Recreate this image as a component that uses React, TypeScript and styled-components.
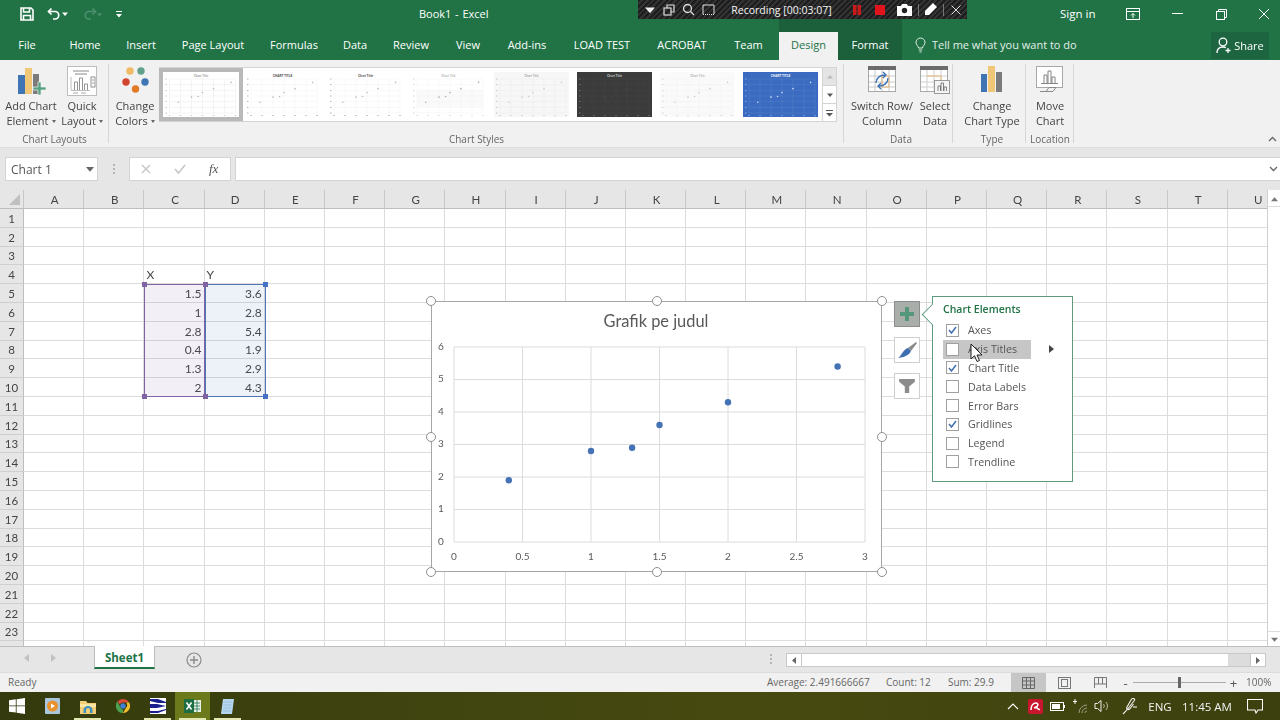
import React from "react";
import styled, { createGlobalStyle, css } from "styled-components";

const GREEN = "#217346";
const DARKGREEN = "#1c5f3b";
const UI = `"Open Sans", "Noto Sans", sans-serif`;
const SHEET = `Lato, "Open Sans", sans-serif`;

const Global = createGlobalStyle`
  html, body { margin: 0; padding: 0; overflow: hidden; background: #fff; }
  * { box-sizing: border-box; }
`;

const Page = styled.div`
  position: relative;
  width: 1280px;
  height: 720px;
  overflow: hidden;
  display: flex;
  flex-direction: column;
  font-family: ${UI};
  filter: blur(0.4px);
`;

/* ---------- title bar ---------- */
const TitleBar = styled.div`
  height: 30px;
  flex: none;
  background: ${GREEN};
  display: flex;
  align-items: stretch;
  color: #fff;
`;
const Qat = styled.div`
  width: 419px;
  flex: none;
  display: flex;
  align-items: center;
  padding: 0 0 2px 20px;
`;
const QatItem = styled.span<{ $w: number }>`
  width: ${(p) => p.$w}px;
  height: 16px;
  flex: none;
  display: flex;
  align-items: center;
`;
const WindowTitle = styled.div`
  width: 360px;
  flex: none;
  display: flex;
  align-items: center;
  padding-bottom: 3px;
  font-size: 11px;
  white-space: pre;
  word-spacing: -1px;
`;
const ContextStrip = styled.div`
  width: 123px;
  flex: none;
  background: ${DARKGREEN};
`;
const SignIn = styled.div`
  margin-left: 158px;
  width: 55px;
  flex: none;
  display: flex;
  align-items: center;
  padding-bottom: 3px;
  font-size: 11.5px;
`;
const WinButton = styled.div<{ $w: number }>`
  width: ${(p) => p.$w}px;
  flex: none;
  display: flex;
  align-items: center;
  justify-content: center;
  padding-bottom: 2px;
`;

/* ---------- recorder overlay ---------- */
const Recorder = styled.div`
  position: absolute;
  left: 638px;
  top: 0;
  width: 329px;
  height: 19px;
  display: flex;
  align-items: center;
  color: #f4f4f4;
  font-size: 10.5px;
  background: repeating-linear-gradient(135deg, #1d1d1d 0 2px, #333 2px 4px);
`;
const RecItem = styled.span<{ $w: number }>`
  width: ${(p) => p.$w}px;
  flex: none;
  display: flex;
  align-items: center;
  justify-content: center;
  white-space: nowrap;
`;

/* ---------- tabs ---------- */
const TabBar = styled.div`
  height: 30px;
  flex: none;
  background: ${GREEN};
  display: flex;
  align-items: stretch;
`;
const Tab = styled.div<{ $w: number; $kind?: "design" | "format" }>`
  width: ${(p) => p.$w}px;
  flex: none;
  display: flex;
  align-items: center;
  justify-content: center;
  padding-bottom: 1px;
  color: #fff;
  font-size: 11px;
  white-space: nowrap;
  ${(p) => p.$kind === "format" && css`background: ${DARKGREEN};`}
  ${(p) =>
    p.$kind === "design" &&
    css`
      color: ${GREEN};
      background: linear-gradient(${DARKGREEN} 0 2px, #f1f1f1 2px);
    `}
`;
const TellMe = styled.div`
  margin-left: 13px;
  width: 296px;
  flex: none;
  display: flex;
  align-items: center;
  gap: 6px;
  padding-bottom: 1px;
  color: #e4efe9;
  font-size: 11px;
`;
const Share = styled.div`
  width: 58px;
  flex: none;
  margin: 2px 0 1px;
  background: #1d6540;
  color: #fff;
  font-size: 11px;
  display: flex;
  align-items: center;
  justify-content: center;
  gap: 3px;
`;

/* ---------- ribbon ---------- */
const Ribbon = styled.div`
  height: 88px;
  flex: none;
  background: #f1f1f1;
  border-bottom: 1px solid #dcdcdc;
  display: flex;
  position: relative;
`;
const Group = styled.div<{ $w: number }>`
  width: ${(p) => p.$w}px;
  flex: none;
  display: flex;
  flex-direction: column;
  padding-top: 6px;
  position: relative;
  &::after {
    content: "";
    position: absolute;
    right: 0;
    top: 4px;
    bottom: 4px;
    width: 1px;
    background: #d6d6d6;
  }
`;
const GroupBody = styled.div<{ $pad?: number }>`
  display: flex;
  padding-left: ${(p) => p.$pad ?? 0}px;
`;
const GroupLabel = styled.div<{ $dx?: number }>`
  margin-top: auto;
  height: 16px;
  line-height: 16px;
  padding-left: ${(p) => p.$dx ?? 0}px;
  text-align: center;
  color: #666;
  font-size: 10px;
  white-space: nowrap;
`;
const BigButton = styled.div<{ $w: number }>`
  width: ${(p) => p.$w}px;
  flex: none;
  display: flex;
  flex-direction: column;
  align-items: center;
`;
const BigIcon = styled.div`
  height: 32px;
  display: flex;
  align-items: flex-start;
  justify-content: center;
`;
const BigLabel = styled.div`
  font-size: 11px;
  line-height: 15px;
  color: #444;
  text-align: center;
  white-space: nowrap;
`;
const Caret = styled.span`
  display: inline-block;
  width: 0;
  height: 0;
  margin-left: 3px;
  vertical-align: 2px;
  border-left: 2.5px solid transparent;
  border-right: 2.5px solid transparent;
  border-top: 3px solid #666;
`;
const Gallery = styled.div`
  margin: 1px 0 0 4px;
  width: 664px;
  height: 55px;
  flex: none;
  display: flex;
  align-items: center;
  gap: 8px;
  background: #fff;
  border: 1px solid #d4d4d4;
  border-left: 0;
`;
const Thumb = styled.div<{ $selected?: boolean }>`
  width: ${(p) => (p.$selected ? 84 : 75)}px;
  height: ${(p) => (p.$selected ? 53 : 45)}px;
  margin-right: ${(p) => (p.$selected ? -6 : 0)}px;
  flex: none;
  border: ${(p) => (p.$selected ? "4px solid #b9b9b9" : "0")};
  display: flex;
  & > svg { width: 100%; height: 100%; display: block; }
`;
const GalleryScroll = styled.div`
  margin-top: 1px;
  width: 14px;
  height: 55px;
  flex: none;
  display: flex;
  flex-direction: column;
  border: 1px solid #d4d4d4;
  border-left: 0;
`;
const ScrollCell = styled.div<{ $off?: boolean }>`
  flex: 1;
  display: flex;
  align-items: center;
  justify-content: center;
  background: ${(p) => (p.$off ? "#e4e4e4" : "#fff")};
  & + & { border-top: 1px solid #d4d4d4; }
`;
const Collapse = styled.div`
  position: absolute;
  right: 2px;
  bottom: 3px;
  width: 12px;
  height: 10px;
  display: flex;
  align-items: center;
  justify-content: center;
`;

/* ---------- formula bar ---------- */
const FormulaBar = styled.div`
  height: 42px;
  flex: none;
  background: #e6e6e6;
  padding: 9px 0 9px 5px;
  display: flex;
  align-items: stretch;
`;
const NameBox = styled.div`
  width: 93px;
  flex: none;
  background: #fff;
  border: 1px solid #d4d4d4;
  padding: 0 3px 0 5px;
  font-size: 12px;
  color: #555;
  display: flex;
  align-items: center;
  justify-content: space-between;
`;
const Dots = styled.div`
  width: 31px;
  flex: none;
  display: flex;
  flex-direction: column;
  align-items: center;
  justify-content: center;
  gap: 2px;
`;
const Dot = styled.span`
  width: 2px;
  height: 2px;
  background: #b4b4b4;
`;
const FxBox = styled.div`
  width: 102px;
  flex: none;
  margin-right: 4px;
  background: #fff;
  border: 1px solid #d4d4d4;
  display: flex;
  align-items: center;
  padding-left: 11px;
  gap: 23px;
`;
const FxText = styled.span`
  font-family: "Liberation Serif", serif;
  font-style: italic;
  font-size: 13px;
  color: #555;
`;
const FormulaInput = styled.div`
  flex: 1;
  background: #fff;
  border: 1px solid #d4d4d4;
  border-right: 0;
  display: flex;
  align-items: center;
  justify-content: flex-end;
  padding-right: 2px;
`;

/* ---------- sheet ---------- */
const SheetRow = styled.div`
  height: 456px;
  flex: none;
  display: flex;
`;
const SheetArea = styled.div`
  position: relative;
  width: 1267px;
  flex: none;
  overflow: hidden;
  background: #fff;
`;
const CellGrid = styled.div`
  display: grid;
  grid-template-columns: 24px repeat(21, 60.2px);
  grid-template-rows: 19px repeat(24, 18.8px);
  font-family: ${SHEET};
`;
const Corner = styled.div`
  background: #e6e6e6;
  border-right: 1px solid #c8c8c8;
  border-bottom: 1px solid #bdbdbd;
  position: relative;
  &::after {
    content: "";
    position: absolute;
    right: 3px;
    bottom: 3px;
    width: 0;
    height: 0;
    border-left: 11px solid transparent;
    border-bottom: 11px solid #c0c0c0;
  }
`;
const ColHead = styled.div`
  background: #e6e6e6;
  border-right: 1px solid #c8c8c8;
  border-bottom: 1px solid #bdbdbd;
  padding-left: 2px;
  font-size: 11.5px;
  color: #444;
  display: flex;
  align-items: center;
  justify-content: center;
`;
const RowHead = styled.div`
  background: #e6e6e6;
  border-right: 1px solid #bdbdbd;
  border-bottom: 1px solid #cfcfcf;
  padding-top: 1px;
  font-size: 11.5px;
  color: #444;
  display: flex;
  align-items: center;
  justify-content: center;
`;
const Cell = styled.div<{ $right?: boolean }>`
  border-right: 1px solid #dcdcdc;
  border-bottom: 1px solid #dcdcdc;
  font-size: 12px;
  color: #444;
  display: flex;
  align-items: center;
  justify-content: ${(p) => (p.$right ? "flex-end" : "flex-start")};
  padding: 1px 2px 0 2px;
`;
const Range = styled.div<{ $left: number; $color: string; $fill: string }>`
  position: absolute;
  left: ${(p) => p.$left}px;
  top: 94px;
  width: 61px;
  height: 113px;
  border: 1.5px solid ${(p) => p.$color};
  background: ${(p) => p.$fill};
`;
const RangeHandle = styled.span<{ $x: "l" | "r"; $y: "t" | "b"; $color: string }>`
  position: absolute;
  width: 5px;
  height: 5px;
  background: ${(p) => p.$color};
  ${(p) => (p.$x === "l" ? "left: -3px;" : "right: -3px;")}
  ${(p) => (p.$y === "t" ? "top: -3px;" : "bottom: -3px;")}
`;
const ChartFrame = styled.div`
  position: absolute;
  left: 431px;
  top: 111px;
  width: 451px;
  height: 271px;
  background: #fff;
  border: 1.5px solid #a6a6a6;
  & > svg { position: absolute; left: -1.5px; top: -1.5px; }
`;
const ChartHandle = styled.span<{ $x: number; $y: number }>`
  position: absolute;
  left: ${(p) => p.$x * 451 - 6}px;
  top: ${(p) => p.$y * 271 - 6}px;
  width: 10px;
  height: 10px;
  border-radius: 50%;
  background: #fff;
  border: 1.5px solid #8f8f8f;
`;
const ToolButton = styled.div<{ $top: number; $active?: boolean }>`
  position: absolute;
  left: 894px;
  top: ${(p) => p.$top}px;
  width: 26px;
  height: 26px;
  background: ${(p) => (p.$active ? "#a9aeab" : "#fff")};
  border: 1px solid ${(p) => (p.$active ? "#8d8d8d" : "#cfcfcf")};
  display: flex;
  align-items: center;
  justify-content: center;
`;
const Flyout = styled.div`
  position: absolute;
  left: 932px;
  top: 106px;
  width: 141px;
  height: 186px;
  background: #fff;
  border: 1px solid #5f9a7e;
  padding: 5px 0 0 10px;
  &::before {
    content: "";
    position: absolute;
    left: -9px;
    top: 9px;
    width: 16px;
    height: 16px;
    background: #fff;
    border-left: 1px solid #5f9a7e;
    border-bottom: 1px solid #5f9a7e;
    transform: rotate(45deg) scale(0.9);
  }
`;
const FlyoutTitle = styled.div`
  position: relative;
  font-size: 10.5px;
  font-weight: 600;
  line-height: 14px;
  color: ${GREEN};
  margin-bottom: 5px;
`;
const ElementRow = styled.div`
  height: 18.8px;
  display: flex;
  align-items: center;
`;
const ElementBody = styled.div<{ $hover?: boolean }>`
  width: 88px;
  height: 18.8px;
  flex: none;
  display: flex;
  align-items: center;
  padding-left: 3px;
  gap: 9px;
  font-size: 10.7px;
  color: #555;
  white-space: nowrap;
  background: ${(p) => (p.$hover ? "#c6c6c6" : "transparent")};
`;
const Check = styled.span`
  width: 13px;
  height: 13px;
  flex: none;
  background: #fff;
  border: 1px solid #a0a0a0;
  display: flex;
  align-items: center;
  justify-content: center;
`;
const SubArrow = styled.span`
  margin-left: 18px;
  width: 0;
  height: 0;
  border-top: 4px solid transparent;
  border-bottom: 4px solid transparent;
  border-left: 5px solid #444;
`;
const Pointer = styled.div`
  position: absolute;
  left: 970px;
  top: 153px;
  width: 14px;
  height: 20px;
  display: flex;
`;
const VScroll = styled.div`
  width: 13px;
  flex: none;
  background: #fff;
  border-left: 1px solid #d0d0d0;
  display: flex;
  flex-direction: column;
  padding-top: 2px;
`;
const VButton = styled.div`
  height: 15px;
  flex: none;
  background: #fff;
  border-bottom: 1px solid #dcdcdc;
  display: flex;
  align-items: center;
  justify-content: center;
`;
const VThumb = styled.div`
  flex: 1;
  background: #fff;
`;
const VEnd = styled(VButton)`
  border-bottom: 0;
  border-top: 1px solid #dcdcdc;
`;

/* ---------- sheet tabs ---------- */
const TabStrip = styled.div`
  height: 26px;
  flex: none;
  background: #e6e6e6;
  border-top: 1px solid #bdbdbd;
  display: flex;
  align-items: flex-start;
`;
const NavArrows = styled.div`
  width: 94px;
  height: 22px;
  flex: none;
  display: flex;
  align-items: center;
  padding-left: 24px;
  gap: 22px;
`;
const SheetTab = styled.div`
  width: 61px;
  height: 23px;
  margin-top: -1px;
  padding-top: 2px;
  flex: none;
  background: #fff;
  border-bottom: 2px solid ${GREEN};
  border-left: 1px solid #bdbdbd;
  border-right: 1px solid #bdbdbd;
  color: ${GREEN};
  font-weight: 700;
  font-size: 11.5px;
  display: flex;
  align-items: center;
  justify-content: center;
`;
const AddSheet = styled.div`
  margin-left: 31px;
  width: 18px;
  height: 25px;
  flex: none;
  display: flex;
  align-items: center;
`;
const SplitDots = styled(Dots)`
  margin-left: 555px;
  width: 24px;
  height: 24px;
`;
const HScroll = styled.div`
  margin-left: 3px;
  margin-top: 6px;
  width: 480px;
  height: 14px;
  flex: none;
  display: flex;
  border: 1px solid #c8c8c8;
  background: #dcdcdc;
`;
const HButton = styled.div`
  width: 14px;
  flex: none;
  background: #fff;
  display: flex;
  align-items: center;
  justify-content: center;
`;
const HThumb = styled.div`
  width: 427px;
  flex: none;
  background: #fff;
  border-left: 1px solid #c8c8c8;
`;
const HGap = styled.div`
  flex: 1;
  border-right: 1px solid #c8c8c8;
`;

/* ---------- status bar ---------- */
const StatusBar = styled.div`
  height: 20px;
  flex: none;
  background: #f1f1f1;
  border-top: 1px solid #dcdcdc;
  display: flex;
  align-items: center;
  font-size: 10px;
  color: #666;
`;
const StatusText = styled.span<{ $w: number; $ml?: number }>`
  width: ${(p) => p.$w}px;
  margin: -2px 0 0 ${(p) => p.$ml ?? 0}px;
  flex: none;
  white-space: nowrap;
`;
const ViewButton = styled.div<{ $w: number; $active?: boolean }>`
  width: ${(p) => p.$w}px;
  height: 19px;
  flex: none;
  display: flex;
  align-items: center;
  justify-content: center;
  background: ${(p) => (p.$active ? "#c6c6c6" : "transparent")};
`;
const Zoomer = styled.div`
  width: 93px;
  height: 1px;
  flex: none;
  background: #aaa;
  position: relative;
`;
const ZoomThumb = styled.span`
  position: absolute;
  left: 45px;
  top: -5px;
  width: 3px;
  height: 11px;
  background: #666;
`;
const ZoomSign = styled.span<{ $w: number }>`
  width: ${(p) => p.$w}px;
  flex: none;
  text-align: center;
  font-size: 13px;
  color: #555;
`;

/* ---------- taskbar ---------- */
const Taskbar = styled.div`
  height: 28px;
  flex: none;
  background: linear-gradient(90deg, #343a0d, #3f430f 30%, #474a10 60%, #3c400e);
  display: flex;
  align-items: stretch;
  color: #f2f2f2;
  font-size: 11.5px;
`;
const TaskItem = styled.div<{ $active?: boolean; $open?: boolean }>`
  width: 35px;
  flex: none;
  position: relative;
  display: flex;
  align-items: center;
  justify-content: center;
  background: ${(p) => (p.$active ? "#6d7a1c" : "transparent")};
  ${(p) =>
    p.$open &&
    css`
      &::after {
        content: "";
        position: absolute;
        left: 4px;
        right: 4px;
        bottom: 0;
        height: 2px;
        background: #e6e8b4;
      }
    `}
`;
const StartItem = styled(TaskItem)`
  width: 34px;
  padding-right: 1px;
  margin-right: 1px;
`;
const Tray = styled.div`
  margin-left: auto;
  display: flex;
  padding-right: 10px;
`;
const TrayItem = styled.div<{ $w: number }>`
  width: ${(p) => p.$w}px;
  flex: none;
  display: flex;
  align-items: center;
  justify-content: center;
  white-space: nowrap;
`;

/* ---------- drawings ---------- */
const Tri = ({ c = "#fff", w = 6, down = true }: { c?: string; w?: number; down?: boolean }) => (
  <svg width={w} height={w} viewBox="0 0 6 6">
    <path d={down ? "M0 1.5h6L3 5z" : "M0 4.5h6L3 1z"} fill={c} />
  </svg>
);
const SaveIcon = () => (
  <svg width="14" height="14" viewBox="0 0 14 14" fill="none" stroke="#fff" strokeWidth="1.6">
    <path d="M1 1h10l2 2v10H1z" />
    <path d="M3.5 1v4h6V1M3.5 13V8.5h7V13" />
  </svg>
);
const UndoIcon = ({ c = "#fff" }: { c?: string }) => (
  <svg width="14" height="14" viewBox="0 0 14 14" fill="none" stroke={c} strokeWidth="1.7">
    <path d="M4.5 1.5L1.5 4.5l3 3" />
    <path d="M2 4.5h6a3.7 3.7 0 0 1 0 7.5H6" />
  </svg>
);
const RedoIcon = () => (
  <svg width="14" height="14" viewBox="0 0 14 14" fill="none" stroke="#4d9070" strokeWidth="1.6">
    <path d="M9.5 1.5l3 3-3 3" />
    <path d="M12 4.5H6a3.7 3.7 0 0 0 0 7.5h2" />
  </svg>
);
const Customize = () => (
  <svg width="8" height="10" viewBox="0 0 8 10">
    <path d="M1 2h6v1H1z" fill="#fff" />
    <path d="M1 5h6L4 8.500z" fill="#fff" />
  </svg>
);
const AddChartIcon = () => (
  <svg width="30" height="30" viewBox="0 0 30 30">
    <rect x="2" y="9" width="7" height="19" fill="#3f74b5" />
    <rect x="9" y="2" width="7" height="26" fill="#f0c777" />
    <rect x="17" y="8" width="6" height="20" fill="#7b7b7b" />
    <path d="M25 16v5h5v3h-5v5h-3v-5h-5v-3h5v-5z" fill="#55a283" stroke="#f1f1f1" strokeWidth="0.7" />
  </svg>
);
const QuickLayoutIcon = () => (
  <svg width="30" height="30" viewBox="0 0 30 30" fill="none">
    <rect x="0.500" y="0.500" width="29" height="29" fill="#fff" stroke="#bdbdbd" />
    <path d="M6 5h16M8 8h12" stroke="#8a8a8a" strokeWidth="1" />
    <path d="M4 24.500h19M4 11v13" stroke="#bdbdbd" />
    <path d="M7.500 24v-8h3v8M12.500 24V12h3v12M17.500 24v-6h3v6" stroke="#777" strokeWidth="0.8" />
    <rect x="24" y="11" width="4" height="10" stroke="#777" strokeWidth="0.8" />
    <path d="M25 14h2M25 17h2" stroke="#777" strokeWidth="0.7" />
    <path d="M6 27h5M14 27h5" stroke="#aaa" />
  </svg>
);
const ColorsIcon = () => (
  <svg width="30" height="30" viewBox="0 0 30 30">
    <circle cx="10" cy="5" r="3.700" fill="#f0b963" />
    <circle cx="21" cy="5" r="3.700" fill="#62a08a" />
    <circle cx="6" cy="16" r="3.700" fill="#d2452f" />
    <circle cx="25" cy="16" r="3.700" fill="#3f74b5" />
    <circle cx="15.500" cy="23" r="3.700" fill="#e07a26" />
  </svg>
);
const SwitchIcon = () => (
  <svg width="28" height="26" viewBox="0 0 28 26" fill="none">
    <rect x="0.500" y="0.500" width="27" height="25" fill="#fff" stroke="#a8a8a8" />
    <rect x="0" y="0" width="28" height="4" fill="#6b6b6b" />
    <path d="M7 4v21M14 4v21M21 4v21M1 10h26M1 16h26M1 21h26" stroke="#c9c9c9" />
    <path d="M14 10h7v11h-7z" stroke="#e8b77a" />
    <path d="M8 17c0-5 4-8 9-8m-2-3 3 3-3 3M20 12c0 5-4 8-9 8m2 3-3-3 3-3" stroke="#3f74b5" strokeWidth="1.400" />
  </svg>
);
const SelectDataIcon = () => (
  <svg width="30" height="28" viewBox="0 0 30 28" fill="none">
    <rect x="0.500" y="0.500" width="27" height="25" fill="#fff" stroke="#a8a8a8" />
    <rect x="0" y="0" width="28" height="4" fill="#6b6b6b" />
    <path d="M7 4v21M14 4v21M21 4v21M1 10h26M1 16h26M1 21h26" stroke="#cfcfcf" />
    <path d="M7 10h14v11" stroke="#e8b77a" />
    <rect x="14.500" y="14.500" width="15" height="13" fill="#f4f4f4" stroke="#9a9a9a" />
    <path d="M18 25v-5h2.500v5M21 25v-8h2.500v8M24 25v-4h2.500v4" stroke="#666" strokeWidth="0.8" />
  </svg>
);
const ChangeTypeIcon = () => (
  <svg width="24" height="26" viewBox="0 0 24 26">
    <rect x="1" y="8" width="6" height="18" fill="#3f74b5" />
    <rect x="8" y="0" width="7" height="26" fill="#f0c777" />
    <rect x="16" y="6" width="6" height="20" fill="#7b7b7b" />
  </svg>
);
const MoveChartIcon = () => (
  <svg width="28" height="26" viewBox="0 0 28 26" fill="none">
    <rect x="0.500" y="0.500" width="26" height="21" fill="#fff" stroke="#a8a8a8" />
    <path d="M8 17V9h3v8M12 17V5h3v12M16 17v-6h3v6M5 17.500h17" stroke="#777" strokeWidth="0.9" />
    <path d="M10 25.500l3-4h7l-3 4H4" stroke="#8a8a8a" />
  </svg>
);
const BulbIcon = () => (
  <svg width="11" height="16" viewBox="0 0 11 16" fill="none" stroke="#e4efe9" strokeWidth="1">
    <path d="M3.500 11c0-2-2.500-3-2.500-5.500a4.500 4.500 0 0 1 9 0C10 8 7.500 9 7.500 11z" />
    <path d="M3.800 13h3.400M4.500 15h2" />
  </svg>
);
const ShareIcon = () => (
  <svg width="15" height="17" viewBox="0 0 15 17" fill="none" stroke="#fff" strokeWidth="1.300">
    <circle cx="7" cy="5" r="3.800" />
    <path d="M1 16c0-4 2.500-6 6-6 1 0 2 .2 2.800.6" />
    <path d="M12 11v5M9.500 13.500h5" />
  </svg>
);
const MinChev = ({ up = false }: { up?: boolean }) => (
  <svg width="9" height="6" viewBox="0 0 9 6" fill="none" stroke="#666" strokeWidth="1.300">
    <path d={up ? "M1 5l3.500-3.500L8 5" : "M1 1l3.500 3.500L8 1"} />
  </svg>
);

const DATA: [number, number][] = [
  [1.5, 3.6],
  [1, 2.8],
  [2.8, 5.4],
  [0.4, 1.9],
  [1.3, 2.9],
  [2, 4.3],
];

type MiniProps = {
  bg: string;
  title: string;
  fg: string;
  grid: string;
  dot: string;
  bold?: boolean;
  bands?: boolean;
};
const MiniChart = ({ bg, title, fg, grid, dot, bold, bands }: MiniProps) => {
  const x0 = 6;
  const x1 = 72;
  const y0 = 41;
  const y1 = 7;
  const xs = [0, 0.5, 1, 1.5, 2, 2.5, 3];
  const ys = [0, 1, 2, 3, 4, 5, 6];
  const px = (v: number) => x0 + (v / 3) * (x1 - x0);
  const py = (v: number) => y0 - (v / 6) * (y0 - y1);
  return (
    <svg viewBox="0 0 75 45">
      <rect width="75" height="45" fill={bg} />
      {bands && <rect x={x0} y={py(4)} width={x1 - x0} height={py(1) - py(4)} fill="#fafafa" />}
      <text x="37.500" y="4.500" textAnchor="middle" fontSize="3.200" fontWeight={bold ? 700 : 400} fill={fg} fontFamily="Lato, sans-serif">
        {title}
      </text>
      {xs.map((v) => (
        <line key={v} x1={px(v)} x2={px(v)} y1={y0} y2={y1} stroke={grid} strokeWidth="0.4" />
      ))}
      {ys.map((v) => (
        <line key={v} x1={x0} x2={x1} y1={py(v)} y2={py(v)} stroke={grid} strokeWidth="0.4" />
      ))}
      {ys.map((v) => (
        <rect key={v} x="2" y={py(v) - 0.4} width="1.500" height="0.800" fill={fg} opacity="0.5" />
      ))}
      {xs.map((v) => (
        <rect key={v} x={px(v) - 0.7} y="43" width="1.400" height="0.800" fill={fg} opacity="0.5" />
      ))}
      {DATA.map(([a, b]) => (
        <circle key={a} cx={px(a)} cy={py(b)} r="0.800" fill={dot} />
      ))}
    </svg>
  );
};

const MainChart = () => {
  const L = 23;
  const R = 434;
  const B = 241;
  const T = 46;
  const xs = [0, 0.5, 1, 1.5, 2, 2.5, 3];
  const ys = [0, 1, 2, 3, 4, 5, 6];
  const px = (v: number) => L + (v / 3) * (R - L);
  const py = (v: number) => B - (v / 6) * (B - T);
  const txt = { fontFamily: SHEET, fontSize: 10, fill: "#595959" };
  return (
    <svg width="451" height="271" viewBox="0 0 451 271">
      <text x="225" y="25.500" textAnchor="middle" fontFamily={SHEET} fontSize="16.400" fill="#595959">
        Grafik pe judul
      </text>
      {xs.map((v) => (
        <line key={v} x1={px(v)} x2={px(v)} y1={T} y2={B} stroke="#dcdcdc" />
      ))}
      {ys.map((v) => (
        <line key={v} x1={L} x2={R} y1={py(v)} y2={py(v)} stroke="#dcdcdc" />
      ))}
      {ys.map((v) => (
        <text key={v} x="10" y={py(v) + 2.500} textAnchor="middle" {...txt}>
          {v}
        </text>
      ))}
      {xs.map((v) => (
        <text key={v} x={px(v)} y="259" textAnchor="middle" {...txt}>
          {v}
        </text>
      ))}
      {DATA.map(([a, b]) => (
        <circle key={a} cx={px(a)} cy={py(b)} r="3.200" fill="#4472b4" />
      ))}
    </svg>
  );
};

const ELEMENTS: [string, boolean][] = [
  ["Axes", true],
  ["Axis Titles", false],
  ["Chart Title", true],
  ["Data Labels", false],
  ["Error Bars", false],
  ["Gridlines", true],
  ["Legend", false],
  ["Trendline", false],
];

const TABS: [string, number][] = [
  ["File", 54],
  ["Home", 62],
  ["Insert", 50],
  ["Page Layout", 94],
  ["Formulas", 68],
  ["Data", 54],
  ["Review", 58],
  ["View", 56],
  ["Add-ins", 62],
  ["LOAD TEST", 88],
  ["ACROBAT", 72],
  ["Team", 61],
];

const COLS = "ABCDEFGHIJKLMNOPQRSTU".split("");
const ROWS = Array.from({ length: 24 }, (_, i) => i + 1);
const CELLS: Record<string, string> = {
  C4: "X",
  D4: "Y",
  C5: "1.5",
  D5: "3.6",
  C6: "1",
  D6: "2.8",
  C7: "2.8",
  D7: "5.4",
  C8: "0.4",
  D8: "1.9",
  C9: "1.3",
  D9: "2.9",
  C10: "2",
  D10: "4.3",
};

const THUMBS: MiniProps[] = [
  { bg: "#fff", title: "Chart Title", fg: "#777", grid: "#e6e6e6", dot: "#bbb" },
  { bg: "#fff", title: "CHART TITLE", fg: "#444", grid: "#eee", dot: "#bbb", bold: true },
  { bg: "#fff", title: "Chart Title", fg: "#444", grid: "#eee", dot: "#bbb", bold: true },
  { bg: "#fff", title: "Chart Title", fg: "#999", grid: "#efefef", dot: "#aaa", bands: true },
  { bg: "#f7f7f7", title: "Chart Title", fg: "#888", grid: "#ececec", dot: "#ccc" },
  { bg: "#3b3b3b", title: "Chart Title", fg: "#ccc", grid: "#4a4a4a", dot: "#4a4a4a", bold: true },
  { bg: "#fafafa", title: "Chart Title", fg: "#999", grid: "#eee", dot: "#ccc" },
  { bg: "#3a6bc0", title: "CHART TITLE", fg: "#fff", grid: "#5b85cd", dot: "#cfe0f7", bold: true },
];

export default function App() {
  return (
    <>
      <Global />
      <Page>
        <TitleBar>
          <Qat>
            <QatItem $w={27}><SaveIcon /></QatItem>
            <QatItem $w={15}><UndoIcon /></QatItem>
            <QatItem $w={21}><Tri w={6} /></QatItem>
            <QatItem $w={14}><RedoIcon /></QatItem>
            <QatItem $w={18}><Tri w={5} c="#4d9070" /></QatItem>
            <QatItem $w={10}><Customize /></QatItem>
          </Qat>
          <WindowTitle>{"Book1  -  Excel"}</WindowTitle>
          <ContextStrip />
          <SignIn>Sign in</SignIn>
          <WinButton $w={36}>
            <svg width="14" height="12" viewBox="0 0 14 12" fill="none" stroke="#fff">
              <rect x="0.500" y="0.500" width="13" height="11" />
              <path d="M0 3.500h14M7 10V5.500M5 7.500l2-2 2 2" />
            </svg>
          </WinButton>
          <WinButton $w={52}>
            <svg width="11" height="2" viewBox="0 0 11 2"><rect width="11" height="1" fill="#fff" /></svg>
          </WinButton>
          <WinButton $w={36}>
            <svg width="11" height="11" viewBox="0 0 11 11" fill="none" stroke="#fff">
              <rect x="0.500" y="2.500" width="8" height="8" />
              <path d="M2.500 2.500v-2h8v8h-2" />
            </svg>
          </WinButton>
          <WinButton $w={50}>
            <svg width="12" height="12" viewBox="0 0 12 12" stroke="#fff"><path d="M1 1l10 10M11 1L1 11" /></svg>
          </WinButton>
        </TitleBar>
        <Recorder>
          <RecItem $w={23}><Tri w={10} c="#eee" /></RecItem>
          <RecItem $w={15}>
            <svg width="12" height="12" viewBox="0 0 12 12" fill="none" stroke="#ddd" strokeWidth="1.200">
              <rect x="1" y="4" width="7" height="7" />
              <path d="M4 4V1h7v7H8" />
            </svg>
          </RecItem>
          <RecItem $w={24}>
            <svg width="13" height="13" viewBox="0 0 13 13" fill="none" stroke="#ddd" strokeWidth="1.300">
              <circle cx="5.500" cy="5.500" r="4" />
              <path d="M8.500 8.500L12 12" />
            </svg>
          </RecItem>
          <RecItem $w={16}>
            <svg width="13" height="11" viewBox="0 0 13 11" fill="none" stroke="#ddd">
              <path d="M1 10V1h11v9" />
              <path d="M1 10.500h11" strokeDasharray="1 1" />
            </svg>
          </RecItem>
          <RecItem $w={131}>Recording [00:03:07]</RecItem>
          <RecItem $w={20}>
            <svg width="8" height="10" viewBox="0 0 8 10" fill="#c81a1a"><rect width="3.500" height="10" /><rect x="4.500" width="3.500" height="10" /></svg>
          </RecItem>
          <RecItem $w={26}>
            <svg width="10" height="10" viewBox="0 0 10 10"><rect width="10" height="10" fill="#e0141a" /></svg>
          </RecItem>
          <RecItem $w={22}>
            <svg width="15" height="12" viewBox="0 0 15 12">
              <path d="M0 2h4l1-2h5l1 2h4v10H0z" fill="#fff" />
              <circle cx="7.500" cy="6.500" r="2.700" fill="#222" />
            </svg>
          </RecItem>
          <RecItem $w={6}>
            <svg width="1" height="12" viewBox="0 0 1 12"><rect width="1" height="12" fill="#777" /></svg>
          </RecItem>
          <RecItem $w={18}>
            <svg width="13" height="13" viewBox="0 0 13 13"><path d="M9 0l4 4-8 8H1V8z" fill="#fff" /></svg>
          </RecItem>
          <RecItem $w={8}>
            <svg width="1" height="12" viewBox="0 0 1 12"><rect width="1" height="12" fill="#777" /></svg>
          </RecItem>
          <RecItem $w={18}>
            <svg width="10" height="10" viewBox="0 0 10 10" stroke="#ddd"><path d="M0.500 0.500l9 9M9.500 0.500l-9 9" /></svg>
          </RecItem>
        </Recorder>

        <TabBar>
          {TABS.map(([t, w]) => (
            <Tab key={t} $w={w}>{t}</Tab>
          ))}
          <Tab $w={59} $kind="design">Design</Tab>
          <Tab $w={64} $kind="format">Format</Tab>
          <TellMe><BulbIcon />Tell me what you want to do</TellMe>
          <Share><ShareIcon />Share</Share>
        </TabBar>

        <Ribbon>
          <Group $w={109}>
            <GroupBody $pad={3}>
              <BigButton $w={56}>
                <BigIcon><AddChartIcon /></BigIcon>
                <BigLabel>Add Chart<br />Element<Caret /></BigLabel>
              </BigButton>
              <BigButton $w={46}>
                <BigIcon><QuickLayoutIcon /></BigIcon>
                <BigLabel>Quick<br />Layout<Caret /></BigLabel>
              </BigButton>
            </GroupBody>
            <GroupLabel>Chart Layouts</GroupLabel>
          </Group>
          <Group $w={735}>
            <GroupBody $pad={6}>
              <BigButton $w={40}>
                <BigIcon><ColorsIcon /></BigIcon>
                <BigLabel>Change<br />Colors<Caret /></BigLabel>
              </BigButton>
              <Gallery>
                {THUMBS.map((t, i) => (
                  <Thumb key={i} $selected={i === 0}>
                    <MiniChart {...t} />
                  </Thumb>
                ))}
              </Gallery>
              <GalleryScroll>
                <ScrollCell $off><Tri c="#bbb" w={6} down={false} /></ScrollCell>
                <ScrollCell><Tri c="#555" w={6} /></ScrollCell>
                <ScrollCell>
                  <svg width="7" height="8" viewBox="0 0 7 8"><path d="M0 1h7v1H0zM0 4h7L3.500 7.500z" fill="#555" /></svg>
                </ScrollCell>
              </GalleryScroll>
            </GroupBody>
            <GroupLabel>Chart Styles</GroupLabel>
          </Group>
          <Group $w={109}>
            <GroupBody>
              <BigButton $w={76}>
                <BigIcon><SwitchIcon /></BigIcon>
                <BigLabel>Switch Row/<br />Column</BigLabel>
              </BigButton>
              <BigButton $w={30}>
                <BigIcon><SelectDataIcon /></BigIcon>
                <BigLabel>Select<br />Data</BigLabel>
              </BigButton>
            </GroupBody>
            <GroupLabel $dx={5}>Data</GroupLabel>
          </Group>
          <Group $w={73}>
            <GroupBody $pad={5}>
              <BigButton $w={68}>
                <BigIcon><ChangeTypeIcon /></BigIcon>
                <BigLabel>Change<br />Chart Type</BigLabel>
              </BigButton>
            </GroupBody>
            <GroupLabel $dx={5}>Type</GroupLabel>
          </Group>
          <Group $w={48}>
            <GroupBody>
              <BigButton $w={48}>
                <BigIcon><MoveChartIcon /></BigIcon>
                <BigLabel>Move<br />Chart</BigLabel>
              </BigButton>
            </GroupBody>
            <GroupLabel>Location</GroupLabel>
          </Group>
          <Collapse><MinChev up /></Collapse>
        </Ribbon>

        <FormulaBar>
          <NameBox>Chart 1<Tri c="#666" w={8} /></NameBox>
          <Dots><Dot /><Dot /><Dot /></Dots>
          <FxBox>
            <svg width="10" height="10" viewBox="0 0 10 10" stroke="#c4c4c4" strokeWidth="1.300"><path d="M1 1l8 8M9 1L1 9" /></svg>
            <svg width="12" height="10" viewBox="0 0 12 10" fill="none" stroke="#c4c4c4" strokeWidth="1.500"><path d="M1 5l3.500 4L11 1" /></svg>
            <FxText>fx</FxText>
          </FxBox>
          <FormulaInput><MinChev /></FormulaInput>
        </FormulaBar>

        <SheetRow>
          <SheetArea>
            <CellGrid>
              <Corner />
              {COLS.map((c) => (
                <ColHead key={c}>{c}</ColHead>
              ))}
              {ROWS.map((r) => (
                <React.Fragment key={r}>
                  <RowHead>{r < 24 ? r : ""}</RowHead>
                  {COLS.map((c) => {
                    const v = CELLS[c + r];
                    return (
                      <Cell key={c} $right={r > 4}>
                        {v}
                      </Cell>
                    );
                  })}
                </React.Fragment>
              ))}
            </CellGrid>
            <Range $left={144} $color="#8064a2" $fill="rgba(128,100,162,0.1)">
              <RangeHandle $x="l" $y="t" $color="#8064a2" />
              <RangeHandle $x="l" $y="b" $color="#8064a2" />
            </Range>
            <Range $left={205} $color="#4f75b5" $fill="rgba(79,129,189,0.1)">
              <RangeHandle $x="l" $y="t" $color="#8064a2" />
              <RangeHandle $x="l" $y="b" $color="#8064a2" />
              <RangeHandle $x="r" $y="t" $color="#4472c4" />
              <RangeHandle $x="r" $y="b" $color="#4472c4" />
            </Range>
            <ChartFrame>
              <MainChart />
              <ChartHandle $x={0} $y={0} />
              <ChartHandle $x={0.5} $y={0} />
              <ChartHandle $x={1} $y={0} />
              <ChartHandle $x={0} $y={0.5} />
              <ChartHandle $x={1} $y={0.5} />
              <ChartHandle $x={0} $y={1} />
              <ChartHandle $x={0.5} $y={1} />
              <ChartHandle $x={1} $y={1} />
            </ChartFrame>
            <ToolButton $top={111} $active>
              <svg width="14" height="14" viewBox="0 0 14 14"><path d="M5 0h4v5h5v4H9v5H5V9H0V5h5z" fill="#55977a" /></svg>
            </ToolButton>
            <ToolButton $top={147}>
              <svg width="19" height="17" viewBox="0 0 19 17">
                <path d="M10 6l8-6 1 1-6 8z" fill="#8a8a8a" />
                <path d="M10 6l3 3c-1 3-5 6-13 7 3-2 3-4 5-6 1.500-2 3-3.500 5-4z" fill="#3f6fb0" />
              </svg>
            </ToolButton>
            <ToolButton $top={183}>
              <svg width="16" height="14" viewBox="0 0 18 16"><path d="M0 0h18v3l-6.500 5.500V16h-5V8.500L0 3z" fill="#8c8c8c" /></svg>
            </ToolButton>
            <Flyout>
              <FlyoutTitle>Chart Elements</FlyoutTitle>
              {ELEMENTS.map(([label, on], i) => (
                <ElementRow key={label}>
                  <ElementBody $hover={i === 1}>
                    <Check>
                      {on && (
                        <svg width="9" height="8" viewBox="0 0 9 8" fill="none" stroke="#3f6fb0" strokeWidth="1.500">
                          <path d="M1 4l2.500 3L8 1" />
                        </svg>
                      )}
                    </Check>
                    {label}
                  </ElementBody>
                  {i === 1 && <SubArrow />}
                </ElementRow>
              ))}
            </Flyout>
            <Pointer>
              <svg width="14" height="20" viewBox="0 0 14 20">
                <path d="M1 1v15l3.500-3.300L7 18.500l2.500-1-2.500-5.500h5z" fill="#fff" stroke="#222" strokeWidth="1" />
              </svg>
            </Pointer>
          </SheetArea>
          <VScroll>
            <VButton><Tri c="#777" w={7} down={false} /></VButton>
            <VThumb />
            <VEnd><Tri c="#777" w={7} /></VEnd>
          </VScroll>
        </SheetRow>

        <TabStrip>
          <NavArrows>
            <svg width="5" height="8" viewBox="0 0 5 8"><path d="M5 0v8L0 4z" fill="#c2c2c2" /></svg>
            <svg width="5" height="8" viewBox="0 0 5 8"><path d="M0 0v8l5-4z" fill="#c2c2c2" /></svg>
          </NavArrows>
          <SheetTab>Sheet1</SheetTab>
          <AddSheet>
            <svg width="16" height="16" viewBox="0 0 16 16" fill="none" stroke="#8a8a8a">
              <circle cx="8" cy="8" r="7" strokeWidth="1.200" />
              <path d="M8 4v8M4 8h8" strokeWidth="1.400" />
            </svg>
          </AddSheet>
          <SplitDots><Dot /><Dot /><Dot /></SplitDots>
          <HScroll>
            <HButton><svg width="4" height="7" viewBox="0 0 4 7"><path d="M4 0v7L0 3.500z" fill="#666" /></svg></HButton>
            <HThumb />
            <HGap />
            <HButton><svg width="4" height="7" viewBox="0 0 4 7"><path d="M0 0v7l4-3.500z" fill="#666" /></svg></HButton>
          </HScroll>
        </TabStrip>

        <StatusBar>
          <StatusText $w={759} $ml={8}>Ready</StatusText>
          <StatusText $w={119}>Average: 2.491666667</StatusText>
          <StatusText $w={62}>Count: 12</StatusText>
          <StatusText $w={63}>Sum: 29.9</StatusText>
          <ViewButton $w={35} $active>
            <svg width="13" height="12" viewBox="0 0 13 12" fill="none" stroke="#666"><path d="M.5.500h12v11H.5zM4.500.500v11M8.500.500v11M.5 4h12M.5 8h12" /></svg>
          </ViewButton>
          <ViewButton $w={37}>
            <svg width="13" height="12" viewBox="0 0 13 12" fill="none" stroke="#777"><rect x=".5" y=".5" width="12" height="11" /><rect x="3.500" y="2.500" width="6" height="7" /></svg>
          </ViewButton>
          <ViewButton $w={35}>
            <svg width="13" height="12" viewBox="0 0 13 12" fill="none" stroke="#777"><path d="M.5 11V.5h12V11M.5 7h12M4.500.500V7M8.500.500V7" /></svg>
          </ViewButton>
          <ZoomSign $w={15}>-</ZoomSign>
          <Zoomer><ZoomThumb /></Zoomer>
          <ZoomSign $w={15}>+</ZoomSign>
          <StatusText $w={27} $ml={5}>100%</StatusText>
        </StatusBar>

        <Taskbar>
          <StartItem>
            <svg width="16" height="16" viewBox="0 0 16 16" fill="#fff">
              <path d="M0 2.300L6.800 1.300v6.200H0zM7.600 1.200L16 0v7.500H7.600zM0 8.300h6.800v6.300L0 13.700zM7.600 8.300H16V16l-8.400-1.200z" />
            </svg>
          </StartItem>
          <TaskItem>
            <svg width="15" height="16" viewBox="0 0 15 16">
              <rect width="15" height="16" rx="1" fill="#a9c6dd" />
              <circle cx="7.500" cy="8" r="5.500" fill="#e8912d" />
              <path d="M6 5.500v5l4-2.500z" fill="#fff" />
            </svg>
          </TaskItem>
          <TaskItem $open>
            <svg width="16" height="15" viewBox="0 0 16 15">
              <path d="M0 2h6l1.500 2H16v11H0z" fill="#f2cf76" />
              <path d="M0 5h16v3H0z" fill="#fbe6a3" />
              <path d="M3.500 14v-3a4.500 4 0 0 1 9 0v3h-2.500v-3a2 2 0 0 0-4 0v3z" fill="#3a8fc4" />
            </svg>
          </TaskItem>
          <TaskItem>
            <svg width="14" height="14" viewBox="0 0 14 14">
              <path d="M7 0a7 7 0 0 1 6.100 3.500H7a3.500 3.500 0 0 0-3.200 2.100L1.500 2.500A7 7 0 0 1 7 0z" fill="#d94b38" />
              <path d="M13.100 3.500A7 7 0 0 1 7 14l3-5.200a3.500 3.500 0 0 0 0-5.300z" fill="#f1c02f" />
              <path d="M1.500 2.500L4.500 8.800A3.500 3.500 0 0 0 7 10.500L7 14A7 7 0 0 1 1.500 2.500z" fill="#4aa24f" />
              <circle cx="7" cy="7" r="2.700" fill="#3f7fd6" />
            </svg>
          </TaskItem>
          <TaskItem $open>
            <svg width="16" height="16" viewBox="0 0 16 16">
              <rect width="16" height="16" fill="#fff" />
              <path d="M0 1h8l8 3v1H8L0 3zM0 6h7l9 2-9 2H0zM0 13h8l8-2v1l-8 3H0z" fill="#1a1f8f" />
            </svg>
          </TaskItem>
          <TaskItem $active $open>
            <svg width="17" height="14" viewBox="0 0 17 14">
              <rect x="9" y="1" width="8" height="12" fill="#e8f1ec" />
              <path d="M10 4h6M10 7h6M10 10h6M13 1v12" stroke="#217346" strokeWidth="0.8" />
              <rect width="10" height="14" fill="#1d6f42" />
              <path d="M2.500 3.500l5 7M7.500 3.500l-5 7" stroke="#fff" strokeWidth="1.500" />
            </svg>
          </TaskItem>
          <TaskItem $open>
            <svg width="13" height="15" viewBox="0 0 13 15">
              <path d="M2 0h11l-2 15H0z" fill="#b6d6ee" />
              <path d="M3 3h8M2.700 6h8M2.300 9h8M2 12h8" stroke="#8fb5d2" strokeWidth="0.7" />
            </svg>
          </TaskItem>
          <Tray>
            <TrayItem $w={22}>
              <svg width="12" height="7" viewBox="0 0 12 7" fill="none" stroke="#fff" strokeWidth="1.100"><path d="M1 6l5-5 5 5" /></svg>
            </TrayItem>
            <TrayItem $w={22}>
              <svg width="15" height="15" viewBox="0 0 15 15" fill="none">
                <rect width="15" height="15" rx="2" fill="#c8162c" />
                <path d="M3 11c0-4 2-7 5-7 2 0 2.500 2 1 3.500L6 9m1-1c2 0 3 3 5 2.500" stroke="#fff" strokeWidth="1.600" />
              </svg>
            </TrayItem>
            <TrayItem $w={23}>
              <svg width="15" height="9" viewBox="0 0 15 9">
                <rect x=".5" y=".5" width="13" height="8" fill="none" stroke="#fff" />
                <rect x="2" y="2" width="8" height="5" fill="#fff" />
                <rect x="14" y="3" width="1" height="3" fill="#fff" />
              </svg>
            </TrayItem>
            <TrayItem $w={21}>
              <svg width="14" height="15" viewBox="0 0 14 15" fill="none" stroke="#9a9d80" strokeWidth="1">
                <path d="M6 14a8 8 0 0 1 8-8M9 14a5 5 0 0 1 5-5M12 14a2 2 0 0 1 2-2" />
                <path d="M2 0v5M0 2.500h4" stroke="#fff" />
              </svg>
            </TrayItem>
            <TrayItem $w={24}>
              <svg width="16" height="14" viewBox="0 0 16 14" fill="none" stroke="#f0f0f0" strokeWidth="1">
                <path d="M1 4.500h2.500L7 1.500v11l-3.500-3H1z" />
                <path d="M9.500 5a3 3 0 0 1 0 4M12 3a6 6 0 0 1 0 8" stroke="#b8ba9d" />
              </svg>
            </TrayItem>
            <TrayItem $w={32}>
              <svg width="16" height="17" viewBox="0 0 16 17" fill="none" stroke="#f0f0f0" strokeWidth="1.100">
                <path d="M1 16l3-3 8-10c2-2.500-1.500-3.500-3-1L5 9c-1.500 3 2 3.500 3.500 1l3-4" />
                <path d="M11 9h4" />
              </svg>
            </TrayItem>
            <TrayItem $w={28}>ENG</TrayItem>
            <TrayItem $w={66}>11:45 AM</TrayItem>
            <TrayItem $w={30}>
              <svg width="16" height="15" viewBox="0 0 16 15" fill="none" stroke="#fff" strokeWidth="1.100"><path d="M.5.500h15v10.500H11l-2 3-1-3H.5z" /></svg>
            </TrayItem>
          </Tray>
        </Taskbar>
      </Page>
    </>
  );
}
